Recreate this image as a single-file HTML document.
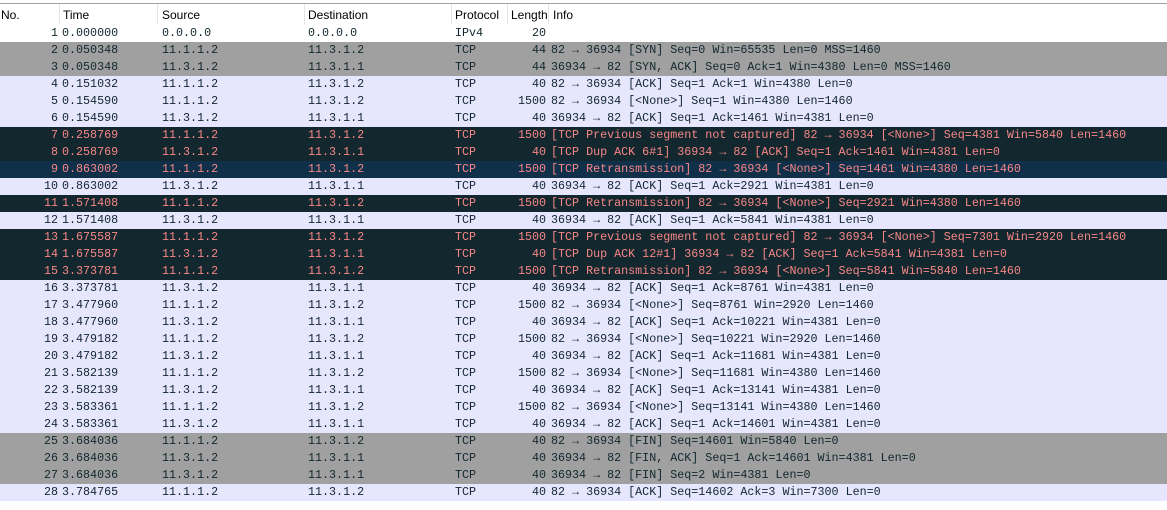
<!DOCTYPE html>
<html><head><meta charset="utf-8"><style>
body{margin:0;width:1167px;height:510px;background:#fff;overflow:hidden;position:relative;font-family:"Liberation Mono",monospace;font-size:11.7px}
.top{position:absolute;left:0;top:3px;width:1167px;height:1px;background:#a0a0a0}
.hdr{position:absolute;left:0;top:4px;width:1167px;height:20px;background:#fff;font-family:"Liberation Sans",sans-serif;font-size:12px;color:#000}
.hdr span{position:absolute;top:4px}
.hdr i{position:absolute;top:0;width:1px;height:20px;background:#e4e4e4}
.r{position:absolute;left:0;width:1167px;height:17px;line-height:17px;white-space:pre;color:#12272e}
.r span{position:absolute;top:0}
.n{right:1109px;text-align:right}
.t{left:62px}.s{left:162px}.d{left:308px}.p{left:455px}
.l{right:621px;text-align:right}.i{left:551px}
.w{background:#fff}.g{background:#a0a0a0}.v{background:#e7e6ff}
.k{background:#12272e;color:#f78787}.b{background:#10304a;color:#f78787}
</style></head><body>
<div class="top"></div>
<div class="hdr"><span style="left:1px">No.</span><i style="left:59px"></i><span style="left:63px">Time</span><i style="left:157px"></i><span style="left:162px">Source</span><i style="left:304px"></i><span style="left:308px">Destination</span><i style="left:451px"></i><span style="left:455px">Protocol</span><i style="left:507px"></i><span style="left:511px">Length</span><i style="left:548px"></i><span style="left:553px">Info</span></div>

<div class="r w" style="top:25px"><span class="n">1</span><span class="t">0.000000</span><span class="s">0.0.0.0</span><span class="d">0.0.0.0</span><span class="p">IPv4</span><span class="l">20</span><span class="i"></span></div>
<div class="r g" style="top:42px"><span class="n">2</span><span class="t">0.050348</span><span class="s">11.1.1.2</span><span class="d">11.3.1.2</span><span class="p">TCP</span><span class="l">44</span><span class="i">82 → 36934 [SYN] Seq=0 Win=65535 Len=0 MSS=1460</span></div>
<div class="r g" style="top:59px"><span class="n">3</span><span class="t">0.050348</span><span class="s">11.3.1.2</span><span class="d">11.3.1.1</span><span class="p">TCP</span><span class="l">44</span><span class="i">36934 → 82 [SYN, ACK] Seq=0 Ack=1 Win=4380 Len=0 MSS=1460</span></div>
<div class="r v" style="top:76px"><span class="n">4</span><span class="t">0.151032</span><span class="s">11.1.1.2</span><span class="d">11.3.1.2</span><span class="p">TCP</span><span class="l">40</span><span class="i">82 → 36934 [ACK] Seq=1 Ack=1 Win=4380 Len=0</span></div>
<div class="r v" style="top:93px"><span class="n">5</span><span class="t">0.154590</span><span class="s">11.1.1.2</span><span class="d">11.3.1.2</span><span class="p">TCP</span><span class="l">1500</span><span class="i">82 → 36934 [&lt;None&gt;] Seq=1 Win=4380 Len=1460</span></div>
<div class="r v" style="top:110px"><span class="n">6</span><span class="t">0.154590</span><span class="s">11.3.1.2</span><span class="d">11.3.1.1</span><span class="p">TCP</span><span class="l">40</span><span class="i">36934 → 82 [ACK] Seq=1 Ack=1461 Win=4381 Len=0</span></div>
<div class="r k" style="top:127px"><span class="n">7</span><span class="t">0.258769</span><span class="s">11.1.1.2</span><span class="d">11.3.1.2</span><span class="p">TCP</span><span class="l">1500</span><span class="i">[TCP Previous segment not captured] 82 → 36934 [&lt;None&gt;] Seq=4381 Win=5840 Len=1460</span></div>
<div class="r k" style="top:144px"><span class="n">8</span><span class="t">0.258769</span><span class="s">11.3.1.2</span><span class="d">11.3.1.1</span><span class="p">TCP</span><span class="l">40</span><span class="i">[TCP Dup ACK 6#1] 36934 → 82 [ACK] Seq=1 Ack=1461 Win=4381 Len=0</span></div>
<div class="r b" style="top:161px"><span class="n">9</span><span class="t">0.863002</span><span class="s">11.1.1.2</span><span class="d">11.3.1.2</span><span class="p">TCP</span><span class="l">1500</span><span class="i">[TCP Retransmission] 82 → 36934 [&lt;None&gt;] Seq=1461 Win=4380 Len=1460</span></div>
<div class="r v" style="top:178px"><span class="n">10</span><span class="t">0.863002</span><span class="s">11.3.1.2</span><span class="d">11.3.1.1</span><span class="p">TCP</span><span class="l">40</span><span class="i">36934 → 82 [ACK] Seq=1 Ack=2921 Win=4381 Len=0</span></div>
<div class="r k" style="top:195px"><span class="n">11</span><span class="t">1.571408</span><span class="s">11.1.1.2</span><span class="d">11.3.1.2</span><span class="p">TCP</span><span class="l">1500</span><span class="i">[TCP Retransmission] 82 → 36934 [&lt;None&gt;] Seq=2921 Win=4380 Len=1460</span></div>
<div class="r v" style="top:212px"><span class="n">12</span><span class="t">1.571408</span><span class="s">11.3.1.2</span><span class="d">11.3.1.1</span><span class="p">TCP</span><span class="l">40</span><span class="i">36934 → 82 [ACK] Seq=1 Ack=5841 Win=4381 Len=0</span></div>
<div class="r k" style="top:229px"><span class="n">13</span><span class="t">1.675587</span><span class="s">11.1.1.2</span><span class="d">11.3.1.2</span><span class="p">TCP</span><span class="l">1500</span><span class="i">[TCP Previous segment not captured] 82 → 36934 [&lt;None&gt;] Seq=7301 Win=2920 Len=1460</span></div>
<div class="r k" style="top:246px"><span class="n">14</span><span class="t">1.675587</span><span class="s">11.3.1.2</span><span class="d">11.3.1.1</span><span class="p">TCP</span><span class="l">40</span><span class="i">[TCP Dup ACK 12#1] 36934 → 82 [ACK] Seq=1 Ack=5841 Win=4381 Len=0</span></div>
<div class="r k" style="top:263px"><span class="n">15</span><span class="t">3.373781</span><span class="s">11.1.1.2</span><span class="d">11.3.1.2</span><span class="p">TCP</span><span class="l">1500</span><span class="i">[TCP Retransmission] 82 → 36934 [&lt;None&gt;] Seq=5841 Win=5840 Len=1460</span></div>
<div class="r v" style="top:280px"><span class="n">16</span><span class="t">3.373781</span><span class="s">11.3.1.2</span><span class="d">11.3.1.1</span><span class="p">TCP</span><span class="l">40</span><span class="i">36934 → 82 [ACK] Seq=1 Ack=8761 Win=4381 Len=0</span></div>
<div class="r v" style="top:297px"><span class="n">17</span><span class="t">3.477960</span><span class="s">11.1.1.2</span><span class="d">11.3.1.2</span><span class="p">TCP</span><span class="l">1500</span><span class="i">82 → 36934 [&lt;None&gt;] Seq=8761 Win=2920 Len=1460</span></div>
<div class="r v" style="top:314px"><span class="n">18</span><span class="t">3.477960</span><span class="s">11.3.1.2</span><span class="d">11.3.1.1</span><span class="p">TCP</span><span class="l">40</span><span class="i">36934 → 82 [ACK] Seq=1 Ack=10221 Win=4381 Len=0</span></div>
<div class="r v" style="top:331px"><span class="n">19</span><span class="t">3.479182</span><span class="s">11.1.1.2</span><span class="d">11.3.1.2</span><span class="p">TCP</span><span class="l">1500</span><span class="i">82 → 36934 [&lt;None&gt;] Seq=10221 Win=2920 Len=1460</span></div>
<div class="r v" style="top:348px"><span class="n">20</span><span class="t">3.479182</span><span class="s">11.3.1.2</span><span class="d">11.3.1.1</span><span class="p">TCP</span><span class="l">40</span><span class="i">36934 → 82 [ACK] Seq=1 Ack=11681 Win=4381 Len=0</span></div>
<div class="r v" style="top:365px"><span class="n">21</span><span class="t">3.582139</span><span class="s">11.1.1.2</span><span class="d">11.3.1.2</span><span class="p">TCP</span><span class="l">1500</span><span class="i">82 → 36934 [&lt;None&gt;] Seq=11681 Win=4380 Len=1460</span></div>
<div class="r v" style="top:382px"><span class="n">22</span><span class="t">3.582139</span><span class="s">11.3.1.2</span><span class="d">11.3.1.1</span><span class="p">TCP</span><span class="l">40</span><span class="i">36934 → 82 [ACK] Seq=1 Ack=13141 Win=4381 Len=0</span></div>
<div class="r v" style="top:399px"><span class="n">23</span><span class="t">3.583361</span><span class="s">11.1.1.2</span><span class="d">11.3.1.2</span><span class="p">TCP</span><span class="l">1500</span><span class="i">82 → 36934 [&lt;None&gt;] Seq=13141 Win=4380 Len=1460</span></div>
<div class="r v" style="top:416px"><span class="n">24</span><span class="t">3.583361</span><span class="s">11.3.1.2</span><span class="d">11.3.1.1</span><span class="p">TCP</span><span class="l">40</span><span class="i">36934 → 82 [ACK] Seq=1 Ack=14601 Win=4381 Len=0</span></div>
<div class="r g" style="top:433px"><span class="n">25</span><span class="t">3.684036</span><span class="s">11.1.1.2</span><span class="d">11.3.1.2</span><span class="p">TCP</span><span class="l">40</span><span class="i">82 → 36934 [FIN] Seq=14601 Win=5840 Len=0</span></div>
<div class="r g" style="top:450px"><span class="n">26</span><span class="t">3.684036</span><span class="s">11.3.1.2</span><span class="d">11.3.1.1</span><span class="p">TCP</span><span class="l">40</span><span class="i">36934 → 82 [FIN, ACK] Seq=1 Ack=14601 Win=4381 Len=0</span></div>
<div class="r g" style="top:467px"><span class="n">27</span><span class="t">3.684036</span><span class="s">11.3.1.2</span><span class="d">11.3.1.1</span><span class="p">TCP</span><span class="l">40</span><span class="i">36934 → 82 [FIN] Seq=2 Win=4381 Len=0</span></div>
<div class="r v" style="top:484px"><span class="n">28</span><span class="t">3.784765</span><span class="s">11.1.1.2</span><span class="d">11.3.1.2</span><span class="p">TCP</span><span class="l">40</span><span class="i">82 → 36934 [ACK] Seq=14602 Ack=3 Win=7300 Len=0</span></div>
</body></html>
